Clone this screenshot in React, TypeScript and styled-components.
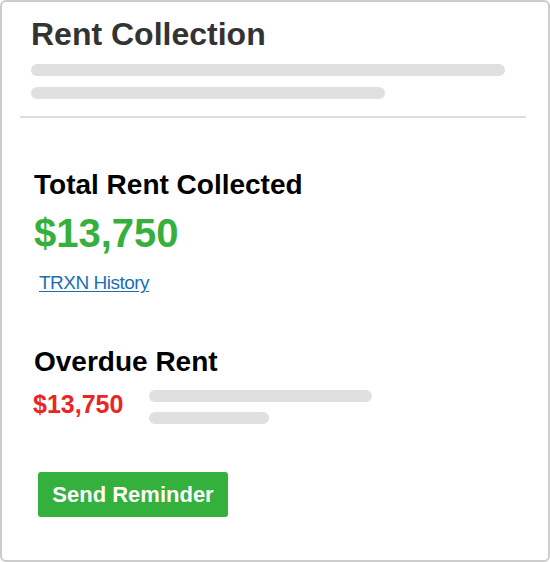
import React from "react";
import styled, { createGlobalStyle } from "styled-components";

const GlobalStyle = createGlobalStyle`
  html, body { margin: 0; padding: 0; background: #ffffff; }
  body { font-family: "Liberation Sans", Arial, Helvetica, sans-serif; }
  * { box-sizing: border-box; }
`;

const Card = styled.div`
  width: 550px;
  height: 562px;
  border: 2px solid #cccccc;
  border-radius: 6px;
  background: #ffffff;
  display: flex;
  flex-direction: column;
`;

const Header = styled.div`
  padding: 14px 0 0 29px;
  display: flex;
  flex-direction: column;
`;

const Title = styled.h1`
  margin: 0;
  font-size: 32px;
  font-weight: 700;
  line-height: 37px;
  color: #333333;
`;

const BarStack = styled.div<{ $top: number; $gap: number }>`
  display: flex;
  flex-direction: column;
  gap: ${(p) => p.$gap}px;
  margin-top: ${(p) => p.$top}px;
`;

const Bar = styled.div<{ $w: number }>`
  width: ${(p) => p.$w}px;
  height: 12px;
  border-radius: 6px;
  background: #e0e0e0;
`;

const Divider = styled.hr`
  border: none;
  height: 2px;
  background: #dddddd;
  margin: 17px 22px 0 18px;
`;

const Body = styled.div`
  padding: 0 0 0 32px;
  display: flex;
  flex-direction: column;
  align-items: flex-start;
`;

const SectionTitle = styled.h2<{ $top: number }>`
  margin: ${(p) => p.$top}px 0 0;
  font-size: 28px;
  font-weight: 700;
  line-height: 32px;
  color: #000000;
`;

const BigAmount = styled.div`
  margin-top: 9px;
  font-size: 40px;
  font-weight: 700;
  line-height: 46px;
  color: #36b03c;
`;

const HistoryLink = styled.a`
  margin: 16px 0 0 5px;
  font-size: 19px;
  letter-spacing: -0.5px;
  line-height: 22px;
  color: #1b6fb3;
  text-decoration: underline;
  text-underline-offset: 2px;
`;

const OverdueRow = styled.div`
  margin-top: 12px;
  margin-left: -1px;
  display: flex;
  align-items: flex-start;
  gap: 26px;
`;

const RedAmount = styled.div`
  font-size: 25px;
  font-weight: 700;
  line-height: 28px;
  color: #ee2424;
`;

const Button = styled.button`
  margin: 48px 0 0 4px;
  width: 190px;
  height: 45px;
  border: none;
  border-radius: 3px;
  background: #34b03c;
  color: #ffffff;
  font-family: "Liberation Sans", Arial, sans-serif;
  font-size: 22px;
  font-weight: 700;
  cursor: pointer;
`;

export default function App() {
  return (
    <>
      <GlobalStyle />
      <Card>
        <Header>
          <Title>Rent Collection</Title>
          <BarStack $top={11} $gap={11}>
            <Bar $w={474} />
            <Bar $w={354} />
          </BarStack>
        </Header>
        <Divider />
        <Body>
          <SectionTitle $top={51}>Total Rent Collected</SectionTitle>
          <BigAmount>$13,750</BigAmount>
          <HistoryLink href="#">TRXN History</HistoryLink>
          <SectionTitle $top={52}>Overdue Rent</SectionTitle>
          <OverdueRow>
            <RedAmount>$13,750</RedAmount>
            <BarStack $top={0} $gap={10}>
              <Bar $w={223} />
              <Bar $w={120} />
            </BarStack>
          </OverdueRow>
          <Button>Send Reminder</Button>
        </Body>
      </Card>
    </>
  );
}
